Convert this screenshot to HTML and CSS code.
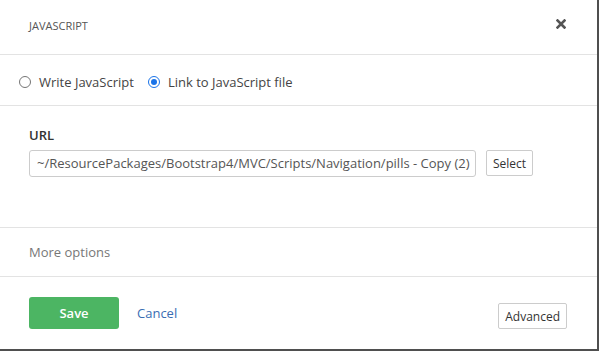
FILE: index.html
```html
<!DOCTYPE html>
<html>
<head>
<meta charset="utf-8">
<link rel="stylesheet" href="styles.css">
</head>
<body>
<div class="dialog">
  <div class="header">
    <span class="title">JAVASCRIPT</span>
    <span class="close"><svg width="10" height="10" viewBox="0 0 10 10"><path d="M1.5 1.5 L8.5 8.5 M8.5 1.5 L1.5 8.5" stroke="#555" stroke-width="2.6" stroke-linecap="square"/></svg></span>
  </div>
  <div class="radios">
    <label class="radio"><span class="dot"></span>Write JavaScript</label>
    <label class="radio checked"><span class="dot"></span>Link to JavaScript file</label>
  </div>
  <div class="section">
    <div class="label">URL</div>
    <div class="field-row">
      <div class="input">~/ResourcePackages/Bootstrap4/MVC/Scripts/Navigation/pills - Copy (2)</div>
      <button class="btn">Select</button>
    </div>
  </div>
  <div class="more">More options</div>
  <div class="footer">
    <button class="save">Save</button>
    <a class="cancel">Cancel</a>
    <button class="btn advanced">Advanced</button>
  </div>
</div>
</body>
</html>
```
FILE: styles.css
```css
html, body {
  margin: 0;
  padding: 0;
  background: #fff;
}
body {
  font-family: "Open Sans", "DejaVu Sans", sans-serif;
  font-size: 13px;
  color: #333;
}
.dialog {
  width: 597px;
  height: 349px;
  border-right: 2px solid #4f4f4f;
  border-bottom: 2px solid #4f4f4f;
  display: flex;
  flex-direction: column;
}
.header {
  height: 55px;
  box-sizing: border-box;
  border-bottom: 1px solid #e3e3e3;
  display: flex;
  align-items: center;
  justify-content: space-between;
  padding: 0 31px 0 29px;
}
.title {
  font-size: 11px;
  color: #555;
  margin-top: -3px;
}
.close {
  display: flex;
  margin-top: -7px;
}
.radios {
  height: 51px;
  border-bottom: 1px solid #e3e3e3;
  display: flex;
  align-items: center;
  padding: 3px 0 0 19px;
  box-sizing: border-box;
  gap: 14px;
  color: #444;
}
.radio {
  display: flex;
  align-items: center;
}
.dot {
  width: 10px;
  height: 10px;
  border: 1px solid #757575;
  border-radius: 50%;
  margin-right: 8px;
  box-sizing: content-box;
  position: relative;
}
.checked .dot {
  border: 1px solid #1a73e8;
}
.checked .dot::after {
  content: "";
  position: absolute;
  left: 2px;
  top: 2px;
  width: 6px;
  height: 6px;
  border-radius: 50%;
  background: #1a73e8;
}
.section {
  height: 122px;
  border-bottom: 1px solid #e3e3e3;
  padding: 20px 0 0 29px;
  box-sizing: border-box;
}
.label {
  font-weight: 600;
  color: #333;
  line-height: 18px;
  margin-bottom: 6px;
}
.field-row {
  display: flex;
  align-items: flex-start;
  gap: 10px;
}
.input {
  width: 447px;
  height: 27px;
  box-sizing: border-box;
  border: 1px solid #ccc;
  border-radius: 3px;
  padding: 0 0 0 7px;
  line-height: 25px;
  color: #555;
  white-space: nowrap;
  overflow: hidden;
}
.btn {
  font-family: inherit;
  font-size: 12px;
  color: #333;
  background: #fff;
  border: 1px solid #ccc;
  border-radius: 2px;
  height: 26px;
  padding: 0 6px;
}
.more {
  height: 49px;
  border-bottom: 1px solid #e3e3e3;
  box-sizing: border-box;
  padding: 0 0 0 29px;
  display: flex;
  align-items: center;
  color: #777;
}
.footer {
  flex: 1;
  display: flex;
  align-items: flex-end;
  padding: 0 30px 20px 29px;
}
.save {
  width: 90px;
  height: 32px;
  background: #4cb563;
  border: none;
  border-radius: 3px;
  color: #fff;
  font-family: inherit;
  font-size: 13px;
  font-weight: 600;
}
.cancel {
  color: #3a6db3;
  margin-left: 18px;
  line-height: 32px;
}
.advanced {
  margin-left: auto;
}
```
